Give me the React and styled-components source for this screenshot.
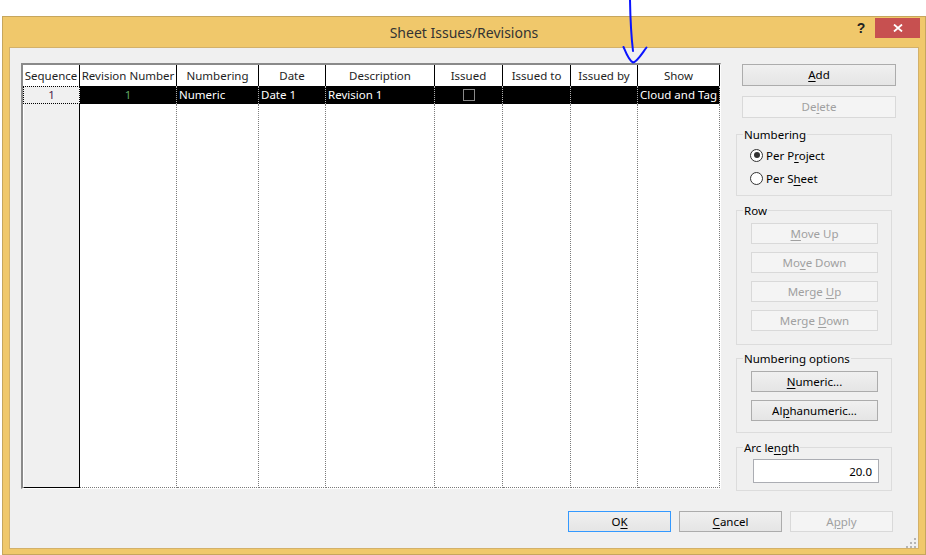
import React from "react";
import styled, { createGlobalStyle } from "styled-components";

const Global = createGlobalStyle`
  html, body { margin: 0; padding: 0; background: #ffffff; }
  body { font-family: "Segoe UI", "Noto Sans", "Liberation Sans", sans-serif; font-size: 11.5px; color: #000; }
  * { box-sizing: border-box; }
`;

const FONT = `"Segoe UI", "Noto Sans", "Liberation Sans", sans-serif`;
const FS = "11.5px";

const Page = styled.div`
  position: relative;
  width: 926px;
  height: 555px;
  overflow: hidden;
  padding: 16px 0 0 2px;
`;

const Annotation = styled.svg`
  position: absolute;
  z-index: 5;
  left: 610px;
  top: 0;
  width: 50px;
  height: 70px;
  overflow: visible;
`;

const Window = styled.div`
  width: 924px;
  height: 539px;
  border: 1px solid #c6a65d;
  background: #f0c86b;
  display: flex;
  flex-direction: column;
`;

const TitleBar = styled.div`
  height: 30px;
  display: grid;
  grid-template-columns: 1fr auto 1fr;
  align-items: center;
`;

const Title = styled.div`
  grid-column: 2;
  font-family: ${FONT};
  font-size: 14px;
  color: #333333;
  white-space: nowrap;
  padding-top: 1px;
`;

const Controls = styled.div`
  grid-column: 3;
  justify-self: end;
  align-self: start;
  display: flex;
  margin-top: 1px;
  padding-right: 5px;
`;

const HelpButton = styled.div`
  width: 28px;
  height: 20px;
  display: flex;
  align-items: center;
  justify-content: center;
  font-family: "Liberation Sans", sans-serif;
  font-weight: bold;
  font-size: 14px;
  color: #222;
`;

const CloseButton = styled.div`
  width: 45px;
  height: 20px;
  background: #c75050;
  display: flex;
  align-items: center;
  justify-content: center;
`;

const Client = styled.div`
  position: relative;
  margin: 0 6px;
  height: 502px;
  border: 1px solid #d3b16a;
  background: #f0f0f0;
  padding: 15px 25px 16px 11px;
  display: flex;
  flex-direction: column;
`;

const MainRow = styled.div`
  display: flex;
  align-items: flex-start;
  gap: 15px;
`;

const TableFrame = styled.div`
  width: 700px;
  height: 426px;
  border-top: 2px solid #8a8a8a;
  border-left: 2px solid #8a8a8a;
  border-right: 1px solid #ffffff;
  border-bottom: 1px solid #ffffff;
`;

const Grid = styled.div`
  display: grid;
  grid-template-columns: 57px 97px 82px 67px 109px 68px 68px 67px 82px;
  grid-template-rows: 21px 18px 1fr;
  height: 100%;
`;

const HeaderCell = styled.div`
  background: #ffffff;
  border-right: 1px solid #000;
  font-family: ${FONT};
  font-size: ${FS};
  color: #1e1e1e;
  display: flex;
  align-items: center;
  justify-content: center;
  padding-bottom: 1px;
  white-space: nowrap;
  overflow: hidden;
`;

const RowCell = styled.div`
  background: ${(p) => (p.$seq ? "#f0f0f0" : "#000")};
  color: ${(p) => p.$color || (p.$seq ? "#4b1c4b" : "#ffffff")};
  border: ${(p) => (p.$seq ? "1px dotted #000" : "none")};
  border-right: ${(p) => (p.$seq ? "1px dotted #000" : "1px dotted #b0b0b0")};
  font-family: ${FONT};
  font-size: ${FS};
  display: flex;
  align-items: center;
  justify-content: ${(p) => (p.$center ? "center" : "flex-start")};
  padding: 0 0 ${(p) => (p.$box ? "0" : "2px")} ${(p) => (p.$center ? "0" : "2px")};
  white-space: nowrap;
  overflow: hidden;
`;

const CheckBox = styled.span`
  width: 12px;
  height: 12px;
  border: 1px solid #8a8a8a;
  background: transparent;
`;

const FillCell = styled.div`
  background: ${(p) => (p.$seq ? "#f0f0f0" : "#ffffff")};
  border-left: ${(p) => (p.$seq ? "1px solid #ffffff" : "none")};
  border-right: ${(p) => (p.$seq ? "1px solid #000" : "1px dotted #7a7a7a")};
  border-bottom: ${(p) => (p.$seq ? "1px solid #000" : "1px dotted #7a7a7a")};
`;

const SidePanel = styled.div`
  width: 160px;
  display: flex;
  flex-direction: column;
  align-items: flex-start;
`;

const Btn = styled.button`
  width: ${(p) => p.$w}px;
  height: ${(p) => p.$h}px;
  margin: ${(p) => p.$m || "0"};
  padding: 0 0 1px;
  border: 1px solid ${(p) => (p.$focus ? "#3399ff" : "#acacac")};
  background: linear-gradient(#f0f0f0, #e5e5e5);
  font-family: ${FONT};
  font-size: ${FS};
  color: #000;
  display: flex;
  align-items: center;
  justify-content: center;
  &:disabled {
    border-color: #d9d9d9;
    background: #f4f4f4;
    color: #a0a0a0;
  }
`;

const U = styled.span`
  text-decoration: underline;
  text-underline-offset: 2px;
`;

const Group = styled.fieldset`
  margin: ${(p) => p.$mt}px 0 0 0;
  padding: 0;
  width: 156px;
  min-width: 0;
  border: 1px solid #dcdcdc;
`;

const Legend = styled.legend`
  margin-left: 6px;
  padding: 2px 1px 0;
  font-family: ${FONT};
  font-size: ${FS};
  line-height: 16px;
  color: #000;
`;

const GroupBody = styled.div`
  padding: ${(p) => p.$pad};
  display: flex;
  flex-direction: column;
  gap: ${(p) => p.$gap || 0}px;
`;

const RadioRow = styled.label`
  height: 18px;
  display: flex;
  align-items: center;
  gap: 3px;
  font-family: ${FONT};
  font-size: ${FS};
  color: #000;
`;

const RadioDot = styled.span`
  position: relative;
  width: 13px;
  height: 13px;
  border-radius: 50%;
  border: 1px solid #333;
  background: #fff;
  &::after {
    content: "";
    display: ${(p) => (p.$checked ? "block" : "none")};
    position: absolute;
    left: 2.5px;
    top: 2.5px;
    width: 6px;
    height: 6px;
    border-radius: 50%;
    background: #333;
  }
`;

const NumberInput = styled.div`
  width: 126px;
  height: 24px;
  border: 1px solid #abadb3;
  background: #fff;
  display: flex;
  align-items: center;
  justify-content: flex-end;
  padding-right: 6px;
  font-family: ${FONT};
  font-size: ${FS};
  color: #000;
`;

const ButtonRow = styled.div`
  margin-top: auto;
  display: flex;
  justify-content: flex-end;
  gap: 8px;
`;

const SizeGrip = styled.svg`
  position: absolute;
  right: 2px;
  bottom: 0px;
  width: 10px;
  height: 10px;
`;

const columns = [
  "Sequence",
  "Revision Number",
  "Numbering",
  "Date",
  "Description",
  "Issued",
  "Issued to",
  "Issued by",
  "Show",
];

export default function App() {
  return (
    <>
      <Global />
      <Page>
        <Annotation viewBox="610 0 50 70">
          <path
            d="M630 0 C630.3 18 631 34 633 51"
            fill="none"
            stroke="#0a14ff"
            strokeWidth="2"
            strokeLinecap="round"
          />
          <path
            d="M623.5 47 C626 53 629 61 633 62.5 C637 62 641 55 646.5 47.5"
            fill="none"
            stroke="#0a14ff"
            strokeWidth="2"
            strokeLinecap="round"
          />
        </Annotation>
        <Window>
          <TitleBar>
            <Title>Sheet Issues/Revisions</Title>
            <Controls>
              <HelpButton>?</HelpButton>
              <CloseButton>
                <svg width="10" height="8" viewBox="0 0 10 8">
                  <path d="M1 0.5 L9 7.5 M9 0.5 L1 7.5" stroke="#fff" strokeWidth="1.8" />
                </svg>
              </CloseButton>
            </Controls>
          </TitleBar>
          <Client>
            <MainRow>
              <TableFrame>
                <Grid>
                  {columns.map((c) => (
                    <HeaderCell key={c}>{c}</HeaderCell>
                  ))}
                  <RowCell $seq $center>1</RowCell>
                  <RowCell $center $color="#62a862">1</RowCell>
                  <RowCell>Numeric</RowCell>
                  <RowCell>Date 1</RowCell>
                  <RowCell>Revision 1</RowCell>
                  <RowCell $center $box>
                    <CheckBox />
                  </RowCell>
                  <RowCell />
                  <RowCell />
                  <RowCell>Cloud and Tag</RowCell>
                  {columns.map((c, i) => (
                    <FillCell key={c} $seq={i === 0} />
                  ))}
                </Grid>
              </TableFrame>
              <SidePanel>
                <Btn $w={154} $h={22} $m="1px 0 0 6px">
                  <span><U>A</U>dd</span>
                </Btn>
                <Btn $w={154} $h={22} $m="10px 0 0 6px" disabled>
                  <span>De<U>l</U>ete</span>
                </Btn>
                <Group $mt={7}>
                  <Legend>Numbering</Legend>
                  <GroupBody $pad="3px 0 8px 13px" $gap={5}>
                    <RadioRow>
                      <RadioDot $checked />
                      <span>Per P<U>r</U>oject</span>
                    </RadioRow>
                    <RadioRow>
                      <RadioDot />
                      <span>Per S<U>h</U>eet</span>
                    </RadioRow>
                  </GroupBody>
                </Group>
                <Group $mt={5}>
                  <Legend>Row</Legend>
                  <GroupBody $pad="4px 0 13px 14px" $gap={8}>
                    <Btn $w={127} $h={21} disabled>
                      <span><U>M</U>ove Up</span>
                    </Btn>
                    <Btn $w={127} $h={21} disabled>
                      <span>Mo<U>v</U>e Down</span>
                    </Btn>
                    <Btn $w={127} $h={21} disabled>
                      <span>Merge <U>U</U>p</span>
                    </Btn>
                    <Btn $w={127} $h={21} disabled>
                      <span>Merge <U>D</U>own</span>
                    </Btn>
                  </GroupBody>
                </Group>
                <Group $mt={4}>
                  <Legend>Numbering options</Legend>
                  <GroupBody $pad="4px 0 11px 14px" $gap={8}>
                    <Btn $w={127} $h={21}>
                      <span><U>N</U>umeric...</span>
                    </Btn>
                    <Btn $w={127} $h={21}>
                      <span>Al<U>p</U>hanumeric...</span>
                    </Btn>
                  </GroupBody>
                </Group>
                <Group $mt={5}>
                  <Legend>Arc le<U>n</U>gth</Legend>
                  <GroupBody $pad="3px 0 7px 16px">
                    <NumberInput>20.0</NumberInput>
                  </GroupBody>
                </Group>
              </SidePanel>
            </MainRow>
            <ButtonRow>
              <Btn $w={103} $h={21} $focus>
                <span>O<U>K</U></span>
              </Btn>
              <Btn $w={103} $h={21}>
                <span><U>C</U>ancel</span>
              </Btn>
              <Btn $w={103} $h={21} disabled>
                <span>A<U>p</U>ply</span>
              </Btn>
            </ButtonRow>
            <SizeGrip viewBox="0 0 10 10">
              <g fill="#b5b5b5">
                <rect x="8" y="0" width="2" height="2" />
                <rect x="4" y="4" width="2" height="2" />
                <rect x="8" y="4" width="2" height="2" />
                <rect x="0" y="8" width="2" height="2" />
                <rect x="4" y="8" width="2" height="2" />
                <rect x="8" y="8" width="2" height="2" />
              </g>
            </SizeGrip>
          </Client>
        </Window>
      </Page>
    </>
  );
}
